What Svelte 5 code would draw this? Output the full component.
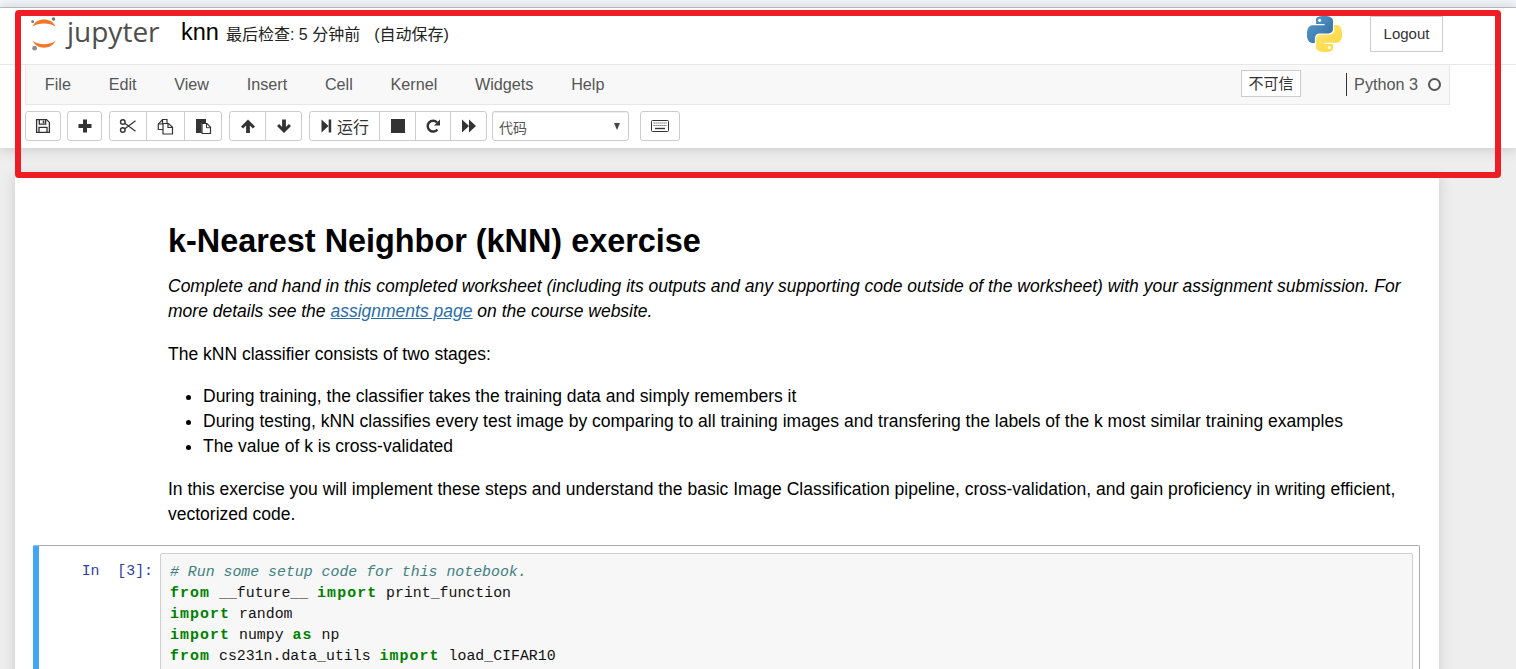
<script lang="ts">
  const menu = ['File', 'Edit', 'View', 'Insert', 'Cell', 'Kernel', 'Widgets', 'Help'];
</script>

<div class="page">
  <div class="browser-strip"></div>

  <header class="header">
    <div class="site-row">
      <div class="logo">
        <svg class="logo-mark" width="28" height="36" viewBox="0 0 28 36">
          <path d="M2.500 10.800C5 5.500 9 3.600 14 3.600s9.200 1.900 11.600 7.200C22.500 8.300 18.500 7.400 14 7.400S5.500 8.300 2.500 10.800z" fill="#f37726" />
          <path d="M2.500 24.600C5.500 27.300 9.500 28.300 14 28.300s8.500-1 11.600-3.700C23.200 29.800 19 31.800 14 31.800S5 29.800 2.500 24.600z" fill="#f37726" />
          <circle cx="23.500" cy="3" r="1.800" fill="#767677" />
          <circle cx="2.600" cy="5.700" r="1.400" fill="#767677" />
          <circle cx="4.600" cy="32.200" r="2.400" fill="#8e8e8f" />
        </svg>
        <span class="wordmark">jupyter</span>
      </div>
      <span class="nb-name">knn</span>
      <span class="checkpoint">最后检查: 5 分钟前</span>
      <span class="autosave">(自动保存)</span>
      <svg class="py-logo" width="35" height="36" viewBox="0 0 24 24" preserveAspectRatio="none">
        <defs>
          <linearGradient id="pyblue" x1="0" y1="0" x2="1" y2="1">
            <stop offset="0" stop-color="#5a9fd4" />
            <stop offset="1" stop-color="#306998" />
          </linearGradient>
          <linearGradient id="pyyellow" x1="0" y1="0" x2="1" y2="1">
            <stop offset="0" stop-color="#ffe873" />
            <stop offset="1" stop-color="#ffd43b" />
          </linearGradient>
        </defs>
        <path fill="url(#pyblue)" fill-rule="evenodd" d="M14.25.18l.9.2.73.26.59.3.45.32.34.34.25.34.16.33.1.3.04.26.02.2-.01.13V8.5l-.05.63-.13.55-.21.46-.26.38-.3.31-.33.25-.35.19-.35.14-.33.1-.3.07-.26.04-.21.02H8.77l-.69.05-.59.14-.5.22-.41.27-.33.32-.27.35-.2.36-.15.37-.1.35-.07.32-.04.27-.02.21v3.06H3.17l-.21-.03-.28-.07-.32-.12-.35-.18-.36-.26-.36-.36-.35-.46-.32-.59-.28-.73-.21-.88-.14-1.05-.05-1.23.06-1.22.16-1.04.24-.87.32-.71.36-.57.4-.44.42-.33.42-.24.4-.16.36-.1.32-.05.24-.01h.16l.06.01h8.16v-.83H6.18l-.01-2.75-.02-.37.05-.34.11-.31.17-.28.25-.26.31-.23.38-.2.44-.18.51-.15.58-.12.64-.1.71-.06.77-.04.84-.02 1.27.05zm-6.3 1.98l-.23.33-.08.41.08.41.23.34.33.22.41.09.41-.09.33-.22.23-.34.08-.41-.08-.41-.23-.33-.33-.22-.41-.09-.41.09z" />
        <path fill="url(#pyyellow)" fill-rule="evenodd" d="M21.040 6.110l.28.06.32.12.35.18.36.27.36.35.35.47.32.59.28.73.21.88.14 1.04.05 1.23-.06 1.23-.16 1.04-.24.86-.32.71-.36.57-.4.45-.42.33-.42.24-.4.16-.36.09-.32.05-.24.02-.16-.01h-8.22v.82h5.84l.01 2.76.02.36-.05.34-.11.31-.17.29-.25.25-.31.24-.38.2-.44.17-.51.15-.58.13-.64.09-.71.07-.77.04-.84.01-1.27-.04-1.07-.14-.9-.2-.73-.25-.59-.3-.45-.33-.34-.34-.25-.34-.16-.33-.1-.3-.04-.25-.02-.2.01-.13v-5.34l.05-.64.13-.54.21-.46.26-.38.3-.32.33-.24.35-.2.35-.14.33-.1.3-.06.26-.04.21-.02.13-.01h5.84l.69-.05.59-.14.5-.21.41-.28.33-.32.27-.35.2-.36.15-.36.1-.35.07-.32.04-.28.02-.21V6.070h2.090l.14.01zm-6.470 14.250l-.23.33-.08.41.08.41.23.33.33.23.41.08.41-.08.33-.23.23-.33.08-.41-.08-.41-.23-.33-.33-.23-.41-.08-.41.08z" />
      </svg>
      <button class="logout">Logout</button>
    </div>

    <nav class="menubar">
      {#each menu as item}
        <span class="menu-item">{item}</span>
      {/each}
      <span class="trust">不可信</span>
      <span class="kernel-name">Python 3</span>
      <span class="kernel-dot"></span>
    </nav>

    <div class="toolbar">
      <div class="btn-group first">
        <button class="btn save" aria-label="save">
          <svg width="16" height="16" viewBox="0 0 16 16" fill="none" stroke="#333" stroke-width="1.300">
            <path d="M1.600 1.600h10l2.800 2.800v10H1.600z" />
            <path d="M4.300 1.800v4.400h6.400V1.800M4 14.200V9.300h8v4.900" />
            <path d="M8.500 2.500v2.800" stroke-width="1.600" />
          </svg>
        </button>
      </div>
      <div class="btn-group">
        <button class="btn plus" aria-label="insert cell">
          <svg width="16" height="16" viewBox="0 0 16 16"><path d="M6 1.500h4v4.500h4.500v4H10v4.500H6V10H1.500V6H6z" fill="#333" /></svg>
        </button>
      </div>
      <div class="btn-group">
        <button class="btn cut" aria-label="cut">
          <svg width="18" height="16" viewBox="0 0 18 16" fill="none" stroke="#333">
            <circle cx="3.800" cy="4" r="2.300" stroke-width="1.400" />
            <circle cx="3.800" cy="12" r="2.300" stroke-width="1.400" />
            <path d="M5.800 5.200L16.500 13.200M5.800 10.800L16.500 2.800" stroke-width="1.200" />
          </svg>
        </button>
        <button class="btn copy" aria-label="copy">
          <svg width="17" height="17" viewBox="0 0 17 17" fill="none" stroke="#333" stroke-width="1.200">
            <path d="M6 11.500H1.300V6.200L5.500 1.500H10v3.500" />
            <path d="M5.500 1.500v4.500H1.300" />
            <path d="M6 5.500h5.500l4 3.700v6.800H6z" fill="#fff" />
            <path d="M11 5.500v4h4.500" />
          </svg>
        </button>
        <button class="btn paste" aria-label="paste">
          <svg width="17" height="17" viewBox="0 0 17 17">
            <path d="M1 1h10v4H6.500v10H1z" fill="#333" />
            <path d="M7 5.500h5l3.500 3.700v6.300H7z" fill="#fff" stroke="#333" stroke-width="1.200" />
            <path d="M11.500 5.800v3.900h3.800" fill="none" stroke="#333" />
          </svg>
        </button>
      </div>
      <div class="btn-group">
        <button class="btn arrow" aria-label="move up">
          <svg width="16" height="16" viewBox="0 0 16 16"><path d="M8 1.500l7 7-2.100 2.100-3-3V15H6.100V7.600l-3 3L1 8.500z" fill="#333" /></svg>
        </button>
        <button class="btn arrow" aria-label="move down">
          <svg width="16" height="16" viewBox="0 0 16 16"><path d="M8 15l7-7-2.100-2.100-3 3V1.500H6.100v7.400l-3-3L1 8z" fill="#333" /></svg>
        </button>
      </div>
      <div class="btn-group">
        <button class="btn run">
          <svg width="12" height="16" viewBox="0 0 12 16"><path d="M1.500 1.500L8.500 8l-7 6.500zM8.700 1.500h2.500v13H8.700z" fill="#333" /></svg>
          <span>运行</span>
        </button>
        <button class="btn stop" aria-label="interrupt">
          <svg width="16" height="16" viewBox="0 0 16 16"><rect x="1" y="1" width="14" height="14" fill="#333" /></svg>
        </button>
        <button class="btn restart" aria-label="restart">
          <svg width="16" height="16" viewBox="0 0 16 16" fill="none">
            <path d="M12.400 11.400A5.400 5.400 0 1 1 12 4.400" stroke="#333" stroke-width="2.400" />
            <path d="M15 1.500v6H9z" fill="#333" />
          </svg>
        </button>
        <button class="btn ff" aria-label="run all">
          <svg width="16" height="16" viewBox="0 0 16 16"><path d="M1 1.500L8 8l-7 6.500zM8 1.500L15 8l-7 6.500z" fill="#333" /></svg>
        </button>
      </div>
      <div class="cell-type">
        <span>代码</span>
        <i class="caret"></i>
      </div>
      <button class="btn keyboard" aria-label="keyboard shortcuts">
        <svg width="18" height="12" viewBox="0 0 18 12" fill="none">
          <rect x=".5" y=".5" width="17" height="11" rx="1" stroke="#333" />
          <path d="M2.500 3h13M2.500 5.500h13" stroke="#555" stroke-width="1.200" stroke-dasharray="1.200 .8" />
          <path d="M4 8.500h10" stroke="#333" stroke-width="1.400" />
        </svg>
      </button>
    </div>
  </header>

  <main class="notebook">
    <section class="text-cell">
      <h1>k-Nearest Neighbor (kNN) exercise</h1>
      <p><em>Complete and hand in this completed worksheet (including its outputs and any supporting code outside of the worksheet) with your assignment submission. For more details see the <a href="#assignments">assignments page</a> on the course website.</em></p>
      <p>The kNN classifier consists of two stages:</p>
      <ul>
        <li>During training, the classifier takes the training data and simply remembers it</li>
        <li>During testing, kNN classifies every test image by comparing to all training images and transfering the labels of the k most similar training examples</li>
        <li>The value of k is cross-validated</li>
      </ul>
      <p>In this exercise you will implement these steps and understand the basic Image Classification pipeline, cross-validation, and gain proficiency in writing efficient, vectorized code.</p>
    </section>

    <section class="code-cell">
      <div class="prompt">In&nbsp;&nbsp;[3]:</div>
      <pre class="input"><span class="c"># Run some setup code for this notebook.</span>
<b>from</b> __future__ <b>import</b> print_function
<b>import</b> random
<b>import</b> numpy <b>as</b> np
<b>from</b> cs231n.data_utils <b>import</b> load_CIFAR10
<b>import</b> matplotlib.pyplot <b>as</b> plt</pre>
    </section>
  </main>

  <div class="annotation"></div>
</div>

<style>
  :global(body) {
    margin: 0;
    background: #eee;
    font-family: "Liberation Sans", Arial, sans-serif;
    color: #000;
    overflow: hidden;
  }

  .page {
    position: relative;
    height: 669px;
    overflow: hidden;
    display: flex;
    flex-direction: column;
  }

  .browser-strip {
    height: 7px;
    flex: none;
    background: #f4f7fc;
    border-bottom: 1px solid #c4c6ca;
  }

  .header {
    flex: none;
    position: relative;
    z-index: 1;
    background: #fff;
    box-shadow: 0 0 12px 1px rgba(87, 87, 87, 0.25);
  }

  .site-row {
    height: 57px;
    box-sizing: border-box;
    border-bottom: 1px solid #e7e7e7;
    display: flex;
    align-items: center;
  }

  .logo {
    display: flex;
    align-items: center;
    margin-left: 30px;
    width: 151px;
  }

  .logo-mark {
    margin-top: -4px;
  }

  .wordmark {
    font-family: "Open Sans", sans-serif;
    font-size: 28px;
    color: #4e4e4e;
    margin-left: 9px;
    line-height: 1;
    margin-top: -10px;
  }

  .nb-name {
    font-size: 23.500px;
    margin-top: -7px;
  }

  .checkpoint,
  .autosave {
    font-family: "Liberation Sans", "Noto Sans CJK SC", sans-serif;
    font-size: 16px;
    color: #222;
    margin-top: -6px;
  }

  .checkpoint {
    margin-left: 7px;
  }

  .autosave {
    margin-left: 14px;
  }

  .py-logo {
    margin-left: auto;
    margin-right: 28px;
    margin-top: -5px;
  }

  .logout {
    width: 73px;
    height: 36px;
    margin: -4px 73px 0 0;
    background: #fff;
    border: 1px solid #ccc;
    font: 15px "Liberation Sans", sans-serif;
    color: #333;
    padding: 0 0 2px;
  }

  .menubar {
    width: 1425px;
    height: 40px;
    margin-left: 25px;
    box-sizing: border-box;
    background: #f8f8f8;
    border: 1px solid #e7e7e7;
    border-top: 0;
    display: flex;
    align-items: center;
    font-size: 16.200px;
    color: #555;
  }

  .menu-item {
    padding: 0 18.850px;
  }

  .trust {
    margin-left: auto;
    margin-top: -2px;
    width: 60px;
    height: 27px;
    box-sizing: border-box;
    background: #fff;
    border: 1px solid #ccc;
    font: 15px/25px "Liberation Sans", "Noto Sans CJK SC", sans-serif;
    color: #333;
    text-align: center;
  }

  .kernel-name {
    margin-left: 45px;
    border-left: 1px solid #333;
    padding-left: 7px;
    line-height: 23px;
  }

  .kernel-dot {
    flex: none;
    width: 9px;
    height: 9px;
    border: 2.500px solid #555;
    border-radius: 50%;
    margin: 0 8px 0 10px;
  }

  .toolbar {
    height: 43px;
    box-sizing: border-box;
    padding: 6px 0 0 25px;
    display: flex;
    align-items: flex-start;
    gap: 7px;
  }

  .btn-group {
    display: flex;
  }

  .btn-group.first {
    margin-right: -1px;
  }

  .btn {
    height: 30px;
    box-sizing: border-box;
    background: #fff;
    border: 1px solid #ccc;
    margin: 0 0 0 -1px;
    padding: 0;
    display: flex;
    align-items: center;
    justify-content: center;
    color: #333;
  }

  .btn-group .btn:first-child {
    margin-left: 0;
    border-radius: 3px 0 0 3px;
  }

  .btn-group .btn:last-child {
    border-radius: 0 3px 3px 0;
  }

  .btn-group .btn:only-child {
    border-radius: 3px;
  }

  .save {
    width: 36px;
  }

  .plus {
    width: 35px;
  }

  .cut,
  .paste {
    width: 38px;
  }

  .copy {
    width: 39px;
  }

  .arrow {
    width: 37px;
  }

  .run {
    width: 71px;
    gap: 5px;
    font: 16px "Noto Sans CJK SC", sans-serif;
  }

  .stop,
  .ff {
    width: 37px;
  }

  .restart {
    width: 36px;
  }

  .cell-type {
    width: 137px;
    height: 30px;
    margin-left: -2px;
    box-sizing: border-box;
    position: relative;
    background: #fff;
    border: 1px solid #ccc;
    border-radius: 3px;
    padding-left: 6px;
    font: 14px/31px "Noto Sans CJK SC", sans-serif;
    color: #555;
    box-shadow: inset 0 1px 1px rgba(0, 0, 0, 0.075);
  }

  .caret {
    position: absolute;
    right: 8px;
    top: 11px;
    border-left: 3.500px solid transparent;
    border-right: 3.500px solid transparent;
    border-top: 7px solid #444;
  }

  .keyboard {
    width: 40px;
    margin-left: 4px;
    border-radius: 3px;
  }

  .notebook {
    flex: none;
    width: 1424px;
    margin: 30px 0 0 15px;
    box-sizing: border-box;
    background: #fff;
    box-shadow: 0 0 12px 1px rgba(87, 87, 87, 0.2);
    padding: 44px 19px 0 18px;
  }

  .text-cell {
    padding: 0 15px 0 135px;
    font-size: 17.500px;
    line-height: 25px;
  }

  h1 {
    margin: 0 0 14px;
    font-size: 32.400px;
    line-height: 38px;
    font-weight: 700;
  }

  p {
    margin: 0 0 18px;
  }

  a {
    color: #296eaa;
  }

  ul {
    margin: -1px 0 18px;
    padding-left: 35px;
  }

  .code-cell {
    display: flex;
    margin-top: 15px;
    padding: 7px 6px 0 0;
    border: 1px solid #ababab;
    border-left: 6px solid #42a5f5;
    border-bottom: 0;
    border-radius: 2px 2px 0 0;
  }

  .prompt {
    width: 121px;
    flex: none;
    padding-right: 7px;
    box-sizing: border-box;
    text-align: right;
    font: 14.870px/21px "Liberation Mono", monospace;
    color: #303f9f;
    padding-top: 8px;
  }

  .input {
    flex: 1;
    margin: 0;
    padding: 8px 9px 0;
    background: #f7f7f7;
    border: 1px solid #cfcfcf;
    border-radius: 2px;
    font: 14.870px/21px "Liberation Mono", monospace;
    color: #111;
  }

  .input b {
    color: #008000;
    letter-spacing: 1.100px;
  }

  .c {
    color: #408080;
    font-style: italic;
  }

  .annotation {
    position: absolute;
    z-index: 2;
    left: 15px;
    top: 10px;
    width: 1486px;
    height: 168px;
    box-sizing: border-box;
    border: 6.500px solid #ee1c25;
    border-radius: 4px;
    pointer-events: none;
  }
</style>
